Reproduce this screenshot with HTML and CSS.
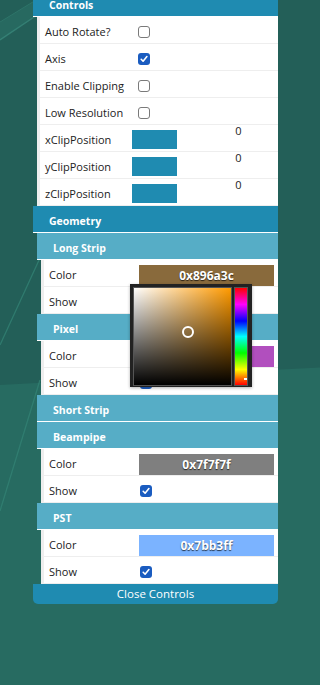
FILE: index.html
```html
<!DOCTYPE html>
<html>
<head>
<meta charset="utf-8">
<title>Controls</title>
<link rel="stylesheet" href="styles.css">
</head>
<body>
<svg class="scene" height="685" aria-hidden="true">
  <rect width="600" height="685" fill="#276b61"/>
  <polygon points="0,0 600,0 600,352 291,369 0,385" fill="#235f58"/>
  <polygon points="0,22 36,0 40,0 40,12 0,40" fill="#2a6f65" opacity=".6"/>
  <line x1="0" y1="40" x2="40" y2="13" stroke="#3c8d7f" stroke-width="1.5" opacity=".7"/>
  <line x1="0" y1="22" x2="36" y2="0" stroke="#347f72" stroke-width="1" opacity=".6"/>
  <line x1="0" y1="345" x2="40" y2="258" stroke="#338274" stroke-width="1.3" opacity=".8"/>
  <line x1="0" y1="511" x2="40" y2="380" stroke="#338274" stroke-width="1.3" opacity=".8"/>
</svg>

<div class="gui">
  <div class="folder">
    <div class="title main first">Controls</div>
    <ul class="rows">
      <li class="cr"><span class="name">Auto Rotate?</span><span class="c"><span class="cb"></span></span></li>
      <li class="cr"><span class="name">Axis</span><span class="c"><span class="cb on"><svg viewBox="0 0 12 12" width="12" height="12"><path d="M3.2 6.3 L5.1 8.2 L8.9 3.6" fill="none" stroke="#fff" stroke-width="1.6" stroke-linecap="round" stroke-linejoin="round"/></svg></span></span></li>
      <li class="cr"><span class="name">Enable Clipping</span><span class="c"><span class="cb"></span></span></li>
      <li class="cr"><span class="name">Low Resolution</span><span class="c"><span class="cb"></span></span></li>
      <li class="cr"><span class="name">xClipPosition</span><span class="c"><span class="slider"><span class="fg" style="width:50%"></span></span><span class="num">0</span></span></li>
      <li class="cr"><span class="name">yClipPosition</span><span class="c"><span class="slider"><span class="fg" style="width:50%"></span></span><span class="num">0</span></span></li>
      <li class="cr"><span class="name">zClipPosition</span><span class="c"><span class="slider"><span class="fg" style="width:50%"></span></span><span class="num">0</span></span></li>
    </ul>
  </div>

  <div class="folder">
    <div class="title main">Geometry</div>
    <ul class="rows">
      <li class="folder">
        <div class="title sub">Long Strip</div>
        <ul class="rows">
          <li class="cr"><span class="name">Color</span><span class="c picker-host">
            <span class="color" style="background:#896a3c">0x896a3c</span>
            <span class="picker">
              <span class="sat"><span class="knob"></span></span>
              <span class="hue"><span class="hue-knob"></span></span>
            </span>
          </span></li>
          <li class="cr"><span class="name">Show</span><span class="c"><span class="cb on"><svg viewBox="0 0 12 12" width="12" height="12"><path d="M3.2 6.3 L5.1 8.2 L8.9 3.6" fill="none" stroke="#fff" stroke-width="1.6" stroke-linecap="round" stroke-linejoin="round"/></svg></span></span></li>
        </ul>
      </li>
      <li class="folder">
        <div class="title sub">Pixel</div>
        <ul class="rows">
          <li class="cr"><span class="name">Color</span><span class="c"><span class="color" style="background:#b14fbe">0xb14fbe</span></span></li>
          <li class="cr"><span class="name">Show</span><span class="c"><span class="cb on"><svg viewBox="0 0 12 12" width="12" height="12"><path d="M3.2 6.3 L5.1 8.2 L8.9 3.6" fill="none" stroke="#fff" stroke-width="1.6" stroke-linecap="round" stroke-linejoin="round"/></svg></span></span></li>
        </ul>
      </li>
      <li class="folder">
        <div class="title sub">Short Strip</div>
      </li>
      <li class="folder">
        <div class="title sub">Beampipe</div>
        <ul class="rows">
          <li class="cr"><span class="name">Color</span><span class="c"><span class="color" style="background:#7f7f7f">0x7f7f7f</span></span></li>
          <li class="cr"><span class="name">Show</span><span class="c"><span class="cb on"><svg viewBox="0 0 12 12" width="12" height="12"><path d="M3.2 6.3 L5.1 8.2 L8.9 3.6" fill="none" stroke="#fff" stroke-width="1.6" stroke-linecap="round" stroke-linejoin="round"/></svg></span></span></li>
        </ul>
      </li>
      <li class="folder">
        <div class="title sub">PST</div>
        <ul class="rows">
          <li class="cr"><span class="name">Color</span><span class="c"><span class="color" style="background:#7bb3ff">0x7bb3ff</span></span></li>
          <li class="cr"><span class="name">Show</span><span class="c"><span class="cb on"><svg viewBox="0 0 12 12" width="12" height="12"><path d="M3.2 6.3 L5.1 8.2 L8.9 3.6" fill="none" stroke="#fff" stroke-width="1.6" stroke-linecap="round" stroke-linejoin="round"/></svg></span></span></li>
        </ul>
      </li>
    </ul>
  </div>

  <div class="close-button">Close Controls</div>
</div>
</body>
</html>
```

FILE: styles.css
```css
html {
  margin: 0;
  padding: 0;
  background: #276b61;
}

body {
  margin: 0;
  padding: 0;
  height: 685px;
  overflow: hidden;
  font-family: "Open Sans", "Liberation Sans", sans-serif;
  font-size: 11px;
  color: #222222;
  position: relative;
}

.scene {
  position: absolute;
  left: 0;
  top: 0;
  width: 100%;
  display: block;
}

.gui {
  position: relative;
  width: 245px;
  margin: 0 0 0 33px;
}

.rows {
  list-style: none;
  margin: 0;
  padding: 0;
}

.folder {
  border-left: 4px solid transparent;
}

.title {
  margin-left: -4px;
  height: 22px;
  padding: 4px 0 0 16px;
  border-bottom: 1px solid #ffffff;
  color: #ffffff;
  font-weight: bold;
  font-size: 10.5px;
  line-height: 22px;
}

.title.first {
  height: 16px;
  padding-top: 0;
  line-height: 10px;
}

.title.main {
  background: #1f8bb1;
}

.title.sub {
  background: #56adc6;
}

.cr {
  display: flex;
  align-items: flex-start;
  height: 26px;
  border-bottom: 1px solid #eeeeee;
  border-left: 3px solid #eeeeee;
  background: #ffffff;
  padding: 0 4px 0 5px;
}

.name {
  flex: 0 0 40%;
  padding-top: 4px;
  line-height: 22px;
  white-space: nowrap;
}

.c {
  flex: 1 1 auto;
  display: flex;
  align-items: flex-start;
  min-width: 0;
}

.picker-host {
  position: relative;
}

.cb {
  width: 12px;
  height: 12px;
  box-sizing: border-box;
  margin: 9px 0 0 1px;
  border: 1px solid #7a7a7a;
  border-radius: 3px;
  background: #ffffff;
  display: block;
}

.cb.on {
  border: none;
  background: #1a5cc0;
}

.cb svg {
  display: block;
}

.slider {
  display: block;
  width: 66%;
  height: 19px;
  margin: 5px 0 0 -5px;
  flex: 0 0 auto;
}

.slider .fg {
  display: block;
  height: 100%;
  background: #1f8bb1;
}

.num {
  margin-left: 13px;
  line-height: 12px;
  color: #222222;
}

.color {
  flex: 1 1 auto;
  display: block;
  height: 21px;
  margin-top: 5px;
  text-align: center;
  color: #ffffff;
  font-weight: bold;
  font-size: 12px;
  line-height: 21px;
  text-shadow: rgba(0, 0, 0, 0.7) 0 1px 1px;
}

.picker {
  position: absolute;
  left: -9px;
  top: 24px;
  z-index: 5;
  display: flex;
  gap: 2px;
  width: 122px;
  height: 103px;
  box-sizing: border-box;
  padding: 3px 4px 1px 3px;
  background: #222222;
  box-shadow: 0 1px 3px rgba(0, 0, 0, 0.3);
}

.sat {
  position: relative;
  display: block;
  width: 97px;
  height: 97px;
  border: 1px solid #555555;
  background:
    linear-gradient(to bottom, rgba(0, 0, 0, 0), #000000),
    linear-gradient(to right, #ffffff, rgba(255, 255, 255, 0)),
    #ff9a00;
}

.knob {
  position: absolute;
  left: 48px;
  top: 38px;
  width: 12px;
  height: 12px;
  box-sizing: border-box;
  border: 2px solid #ffffff;
  border-radius: 50%;
}

.hue {
  position: relative;
  display: block;
  width: 12px;
  height: 97px;
  border: 1px solid #555555;
  background: linear-gradient(to bottom, #ff0000 0%, #ff00ff 17%, #0000ff 34%, #00ffff 50%, #00ff00 67%, #ffff00 84%, #ff0000 100%);
}

.hue-knob {
  position: absolute;
  right: 0;
  top: 90px;
  width: 3px;
  height: 2px;
  background: #ffffff;
}

.close-button {
  height: 20px;
  line-height: 20px;
  text-align: center;
  color: #ffffff;
  font-size: 11.5px;
  background: #1f8bb1;
  border-radius: 0 0 5px 5px;
}
```
